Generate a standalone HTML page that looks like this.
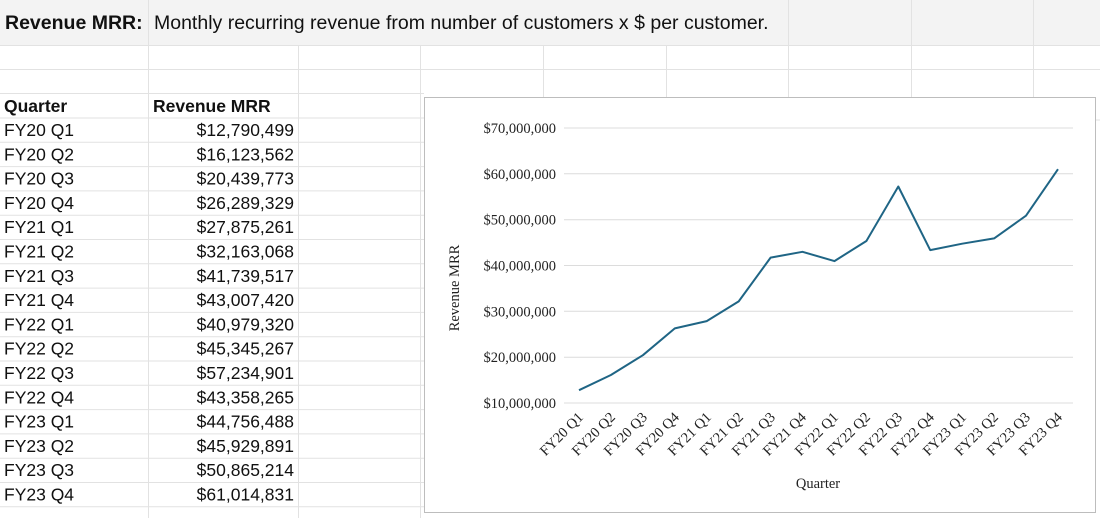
<!DOCTYPE html>
<html><head><meta charset="utf-8"><style>
html,body{margin:0;padding:0;background:#fff;width:1100px;height:518px;overflow:hidden}
svg{display:block}
.s{font-family:"Liberation Sans",sans-serif;font-size:17.5px;fill:#111}
.r{font-family:"Liberation Serif",serif;font-size:14.5px;fill:#222}
</style></head><body>
<svg width="1100" height="518" viewBox="0 0 1100 518" xmlns="http://www.w3.org/2000/svg">
<rect x="0" y="0" width="1100" height="45" fill="#f3f3f3"/>
<g stroke="#e2e2e2" stroke-width="1">
<line x1="0" y1="45.5" x2="1100" y2="45.5"/>
<line x1="0" y1="69.5" x2="1100" y2="69.5"/>
<line x1="148.5" y1="0" x2="148.5" y2="518"/>
<line x1="788.5" y1="0" x2="788.5" y2="97"/>
<line x1="911.5" y1="0" x2="911.5" y2="97"/>
<line x1="1033.5" y1="0" x2="1033.5" y2="97"/>
<line x1="298.5" y1="45" x2="298.5" y2="518"/>
<line x1="420.5" y1="45" x2="420.5" y2="518"/>
<line x1="543.5" y1="45" x2="543.5" y2="97"/>
<line x1="666.5" y1="45" x2="666.5" y2="97"/>
<line x1="0" y1="93.5" x2="424" y2="93.5"/>
<line x1="0" y1="118" x2="424" y2="118"/><line x1="0" y1="142.3" x2="424" y2="142.3"/><line x1="0" y1="166.6" x2="424" y2="166.6"/><line x1="0" y1="190.9" x2="424" y2="190.9"/><line x1="0" y1="215.2" x2="424" y2="215.2"/><line x1="0" y1="239.5" x2="424" y2="239.5"/><line x1="0" y1="263.8" x2="424" y2="263.8"/><line x1="0" y1="288.1" x2="424" y2="288.1"/><line x1="0" y1="312.4" x2="424" y2="312.4"/><line x1="0" y1="336.7" x2="424" y2="336.7"/><line x1="0" y1="361" x2="424" y2="361"/><line x1="0" y1="385.3" x2="424" y2="385.3"/><line x1="0" y1="409.6" x2="424" y2="409.6"/><line x1="0" y1="433.9" x2="424" y2="433.9"/><line x1="0" y1="458.2" x2="424" y2="458.2"/><line x1="0" y1="482.5" x2="424" y2="482.5"/><line x1="0" y1="506.8" x2="424" y2="506.8"/>
<line x1="1096" y1="120" x2="1100" y2="120"/>
</g>
<text class="s" x="5" y="29" font-weight="bold" style="font-size:19.5px">Revenue MRR:</text>
<text class="s" x="154" y="29" style="font-size:19.5px">Monthly recurring revenue from number of customers x $ per customer.</text>
<g class="s">
<text x="4" y="112" font-weight="bold">Quarter</text><text x="153" y="112" font-weight="bold">Revenue MRR</text>
</g>
<g class="s">
<text x="4" y="136">FY20 Q1</text><text x="4" y="160.3">FY20 Q2</text><text x="4" y="184.6">FY20 Q3</text><text x="4" y="208.9">FY20 Q4</text><text x="4" y="233.2">FY21 Q1</text><text x="4" y="257.5">FY21 Q2</text><text x="4" y="281.8">FY21 Q3</text><text x="4" y="306.1">FY21 Q4</text><text x="4" y="330.4">FY22 Q1</text><text x="4" y="354.7">FY22 Q2</text><text x="4" y="379">FY22 Q3</text><text x="4" y="403.3">FY22 Q4</text><text x="4" y="427.6">FY23 Q1</text><text x="4" y="451.9">FY23 Q2</text><text x="4" y="476.2">FY23 Q3</text><text x="4" y="500.5">FY23 Q4</text>
</g>
<g class="s" text-anchor="end">
<text x="294" y="136">$12,790,499</text><text x="294" y="160.3">$16,123,562</text><text x="294" y="184.6">$20,439,773</text><text x="294" y="208.9">$26,289,329</text><text x="294" y="233.2">$27,875,261</text><text x="294" y="257.5">$32,163,068</text><text x="294" y="281.8">$41,739,517</text><text x="294" y="306.1">$43,007,420</text><text x="294" y="330.4">$40,979,320</text><text x="294" y="354.7">$45,345,267</text><text x="294" y="379">$57,234,901</text><text x="294" y="403.3">$43,358,265</text><text x="294" y="427.6">$44,756,488</text><text x="294" y="451.9">$45,929,891</text><text x="294" y="476.2">$50,865,214</text><text x="294" y="500.5">$61,014,831</text>
</g>
<rect x="424.5" y="97.5" width="671" height="415" fill="#fff" stroke="#bdbdbd"/>
<g stroke="#dcdcdc" stroke-width="1">
<line x1="564" y1="128" x2="1073" y2="128"/><line x1="564" y1="173.8" x2="1073" y2="173.8"/><line x1="564" y1="219.7" x2="1073" y2="219.7"/><line x1="564" y1="265.5" x2="1073" y2="265.5"/><line x1="564" y1="311.3" x2="1073" y2="311.3"/><line x1="564" y1="357.2" x2="1073" y2="357.2"/><line x1="564" y1="403" x2="1073" y2="403"/>
</g>
<g class="r" text-anchor="end">
<text x="556" y="133">$70,000,000</text><text x="556" y="178.8">$60,000,000</text><text x="556" y="224.7">$50,000,000</text><text x="556" y="270.5">$40,000,000</text><text x="556" y="316.3">$30,000,000</text><text x="556" y="362.2">$20,000,000</text><text x="556" y="408">$10,000,000</text>
</g>
<polyline fill="none" stroke="#1f6585" stroke-width="2" stroke-linejoin="round" points="579,390.2 610.9,375 642.9,355.2 674.8,328.4 706.7,321.1 738.7,301.4 770.6,257.6 802.5,251.8 834.4,261.1 866.4,241 898.3,186.5 930.2,250.1 962.2,243.7 994.1,238.4 1026,215.7 1058,169.2"/>
<g class="r" text-anchor="end">
<text transform="translate(584,418) rotate(-45)">FY20 Q1</text>
<text transform="translate(616,418) rotate(-45)">FY20 Q2</text>
<text transform="translate(648,418) rotate(-45)">FY20 Q3</text>
<text transform="translate(680,418) rotate(-45)">FY20 Q4</text>
<text transform="translate(712,418) rotate(-45)">FY21 Q1</text>
<text transform="translate(744,418) rotate(-45)">FY21 Q2</text>
<text transform="translate(776,418) rotate(-45)">FY21 Q3</text>
<text transform="translate(807,418) rotate(-45)">FY21 Q4</text>
<text transform="translate(839,418) rotate(-45)">FY22 Q1</text>
<text transform="translate(871,418) rotate(-45)">FY22 Q2</text>
<text transform="translate(903,418) rotate(-45)">FY22 Q3</text>
<text transform="translate(935,418) rotate(-45)">FY22 Q4</text>
<text transform="translate(967,418) rotate(-45)">FY23 Q1</text>
<text transform="translate(999,418) rotate(-45)">FY23 Q2</text>
<text transform="translate(1031,418) rotate(-45)">FY23 Q3</text>
<text transform="translate(1063,418) rotate(-45)">FY23 Q4</text>
</g>
<text class="r" x="818" y="488" text-anchor="middle">Quarter</text>
<text class="r" transform="translate(459,288) rotate(-90)" text-anchor="middle">Revenue MRR</text>
</svg>
</body></html>
